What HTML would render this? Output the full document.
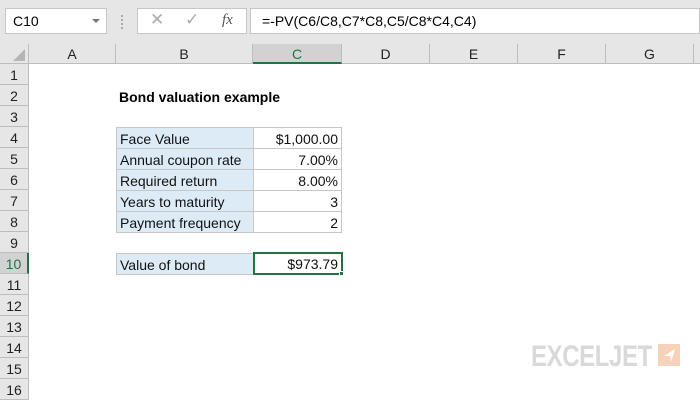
<!DOCTYPE html>
<html><head><style>
body{margin:0;width:700px;height:400px;overflow:hidden;background:#fff;font-family:"Liberation Sans",Arial,sans-serif;position:relative}
.a{position:absolute;box-sizing:border-box}
.top{left:0;top:0;width:700px;height:44px;background:#e6e6e6}
.ch{top:44px;height:20px;background:#e6e6e6;border-right:1px solid #bdbdbd;border-bottom:1px solid #bdbdbd;text-align:center;font-size:14px;line-height:20px;color:#222}
.rh{left:0;width:29px;height:21px;background:#e6e6e6;border-bottom:1px solid #bdbdbd;border-right:1px solid #bdbdbd;text-align:center;font-size:14px;line-height:22px;color:#222}
.c{font-size:14px;line-height:22px;height:22px;border:1px solid #c6c6c6;padding:0 3px;white-space:nowrap;color:#111}
.b{background:#ddebf7}
.r{text-align:right}
</style></head><body>
<div class="a top"></div>
<div class="a" style="left:5px;top:8px;width:102px;height:26px;background:#fff;border:1px solid #c6c6c6;font-size:14px;line-height:24px;padding-left:7px">C10</div>
<div class="a" style="left:92px;top:19px;width:0;height:0;border-left:4px solid transparent;border-right:4px solid transparent;border-top:4px solid #777"></div>
<div class="a" style="left:121px;top:15px;width:2px;height:14px;border-left:2px dotted #aaa"></div>
<div class="a" style="left:137px;top:8px;width:110px;height:26px;background:#fff;border:1px solid #c6c6c6"></div>
<div class="a" style="left:150px;top:10px;font-size:17px;color:#aaa">✕</div>
<div class="a" style="left:185px;top:10px;font-size:17px;color:#aaa">✓</div>
<div class="a" style="left:222px;top:12px;font-size:15px;font-style:italic;font-family:'Liberation Serif',serif;color:#555">fx</div>
<div class="a" style="left:250px;top:8px;width:450px;height:26px;background:#fff;border:1px solid #c6c6c6;font-size:14px;line-height:24px;padding-left:11px">=-PV(C6/C8,C7*C8,C5/C8*C4,C4)</div>
<div class="a ch" style="left:0;width:29px"></div>
<div class="a" style="left:13px;top:49px;width:0;height:0;border-left:12px solid transparent;border-bottom:12px solid #b5b5b5"></div>
<div class="a ch" style="left:29px;width:87px">A</div>
<div class="a ch" style="left:116px;width:137px">B</div>
<div class="a ch" style="left:253px;width:89px;background:#d2d2d2;border-bottom:2px solid #217346;color:#217346">C</div>
<div class="a ch" style="left:342px;width:88px">D</div>
<div class="a ch" style="left:430px;width:88px">E</div>
<div class="a ch" style="left:518px;width:88px">F</div>
<div class="a ch" style="left:606px;width:88px">G</div>
<div class="a ch" style="left:694px;width:6px;border-right:none"></div>
<div class="a rh" style="top:64px">1</div><div class="a rh" style="top:85px">2</div><div class="a rh" style="top:106px">3</div><div class="a rh" style="top:127px">4</div><div class="a rh" style="top:148px">5</div><div class="a rh" style="top:169px">6</div><div class="a rh" style="top:190px">7</div><div class="a rh" style="top:211px">8</div><div class="a rh" style="top:232px">9</div><div class="a rh" style="top:253px;background:#d2d2d2;color:#217346;border-right:2px solid #217346">10</div><div class="a rh" style="top:274px">11</div><div class="a rh" style="top:295px">12</div><div class="a rh" style="top:316px">13</div><div class="a rh" style="top:337px">14</div><div class="a rh" style="top:358px">15</div><div class="a rh" style="top:379px">16</div>
<div class="a" style="left:119px;top:87px;font-size:14px;font-weight:bold;line-height:21px">Bond valuation example</div>
<div class="a c b" style="left:116px;top:127px;width:138px">Face Value</div><div class="a c r" style="left:253px;top:127px;width:89px">$1,000.00</div>
<div class="a c b" style="left:116px;top:148px;width:138px">Annual coupon rate</div><div class="a c r" style="left:253px;top:148px;width:89px">7.00%</div>
<div class="a c b" style="left:116px;top:169px;width:138px">Required return</div><div class="a c r" style="left:253px;top:169px;width:89px">8.00%</div>
<div class="a c b" style="left:116px;top:190px;width:138px">Years to maturity</div><div class="a c r" style="left:253px;top:190px;width:89px">3</div>
<div class="a c b" style="left:116px;top:211px;width:138px">Payment frequency</div><div class="a c r" style="left:253px;top:211px;width:89px">2</div>
<div class="a c b" style="left:116px;top:253px;width:138px">Value of bond</div>
<div class="a c r" style="left:253px;top:252px;width:90px;height:23px;border:2px solid #217346;line-height:21px">$973.79</div>
<div class="a" style="left:339px;top:271px;width:5px;height:5px;background:#217346;border:1px solid #fff"></div>
<div class="a" style="left:531px;top:340px;font-size:30px;font-weight:bold;color:#d9d9d9;letter-spacing:-0.5px;line-height:34px;transform:scaleX(0.8);transform-origin:left top;white-space:nowrap">EXCELJET</div>
<div class="a" style="left:658px;top:344px;width:22px;height:22px;background:#f6d3b8"></div>
<svg class="a" style="left:658px;top:344px" width="22" height="22"><path d="M6 12 L17 5 L13 18 L12 12 Z" fill="#fff"/></svg>
</body></html>
